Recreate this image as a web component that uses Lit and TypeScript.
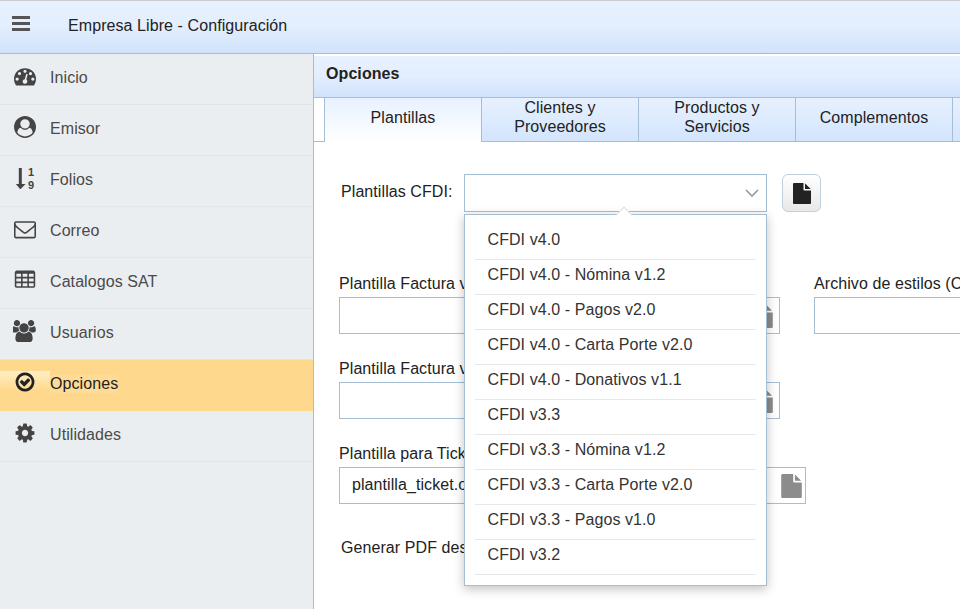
import { LitElement, css, html, svg } from 'lit';
import { customElement } from 'lit/decorators.js';

const ICONS: Record<string, unknown> = {
  gauge: svg`<path d="M384 1152q0-53-37.5-90.5t-90.5-37.5-90.5 37.5-37.5 90.5 37.5 90.5 90.5 37.5 90.5-37.5 37.5-90.5zm192-448q0-53-37.5-90.5t-90.5-37.5-90.5 37.5-37.5 90.5 37.5 90.5 90.5 37.5 90.5-37.5 37.5-90.5zm428 481l101-382q6-26-7.5-48.5t-38.5-29.5-48 6.5-30 39.5l-101 382q-60 5-107 43.5t-63 98.5q-20 77 20 146t117 89 146-20 89-117q16-60-6-117t-72-91zm660-33q0-53-37.5-90.5t-90.5-37.5-90.5 37.5-37.5 90.5 37.5 90.5 90.5 37.5 90.5-37.5 37.5-90.5zm-640-640q0-53-37.5-90.5t-90.5-37.5-90.5 37.5-37.5 90.5 37.5 90.5 90.5 37.5 90.5-37.5 37.5-90.5zm448 192q0-53-37.5-90.5t-90.5-37.5-90.5 37.5-37.5 90.5 37.5 90.5 90.5 37.5 90.5-37.5 37.5-90.5zm320 448q0 261-141 483-19 29-54 29h-1402q-35 0-54-29-141-221-141-483 0-182 71-348t191-286 286-191 348-71 348 71 286 191 191 286 71 348z"/>`,
  user: svg`<path d="M1523 1339q-22-155-87.5-257.5t-184.5-118.5q-67 74-159.5 115.5t-195.5 41.5-195.5-41.5-159.5-115.5q-119 16-184.5 118.5t-87.5 257.5q106 150 271 237.5t356 87.5 356-87.5 271-237.5zm-243-699q0-159-112.5-271.5t-271.5-112.5-271.5 112.5-112.5 271.5 112.5 271.5 271.5 112.5 271.5-112.5 112.5-271.5zm512 256q0 182-70.5 347t-190.5 286-286 191-349 71q-181 0-346-71t-286-191-191-286-71-347q0-182 71-347.5t191-286 286-191 346-70.5q183 0 349 70.5t286 191 190.5 286 70.5 347.5z"/>`,
  mail: svg`<path d="M1664 1504v-768q-32 36-69 66-268 206-426 338-51 43-83 67t-86.5 48.5-102.5 24.5h-2q-48 0-102.5-24.5t-86.5-48.5-83-67q-158-132-426-338-37-30-69-66v768q0 13 9.5 22.5t22.5 9.5h1472q13 0 22.5-9.5t9.5-22.5zm0-1051v-24.5l-.5-13-3-12.5-5.5-9-9-7.5-14-2.5h-1472q-13 0-22.5 9.5t-9.5 22.5q0 168 147 284 193 152 401 317 6 5 35 29.5t46 37.5 44.5 31.5 50.5 27.5 43 9h2q20 0 43-9t50.5-27.5 44.5-31.5 46-37.5 35-29.5q208-165 401-317 54-43 100.5-115.5t46.5-131.5zm128-37v1088q0 66-47 113t-113 47h-1472q-66 0-113-47t-47-113v-1088q0-66 47-113t113-47h1472q66 0 113 47t47 113z"/>`,
  table: svg`<path d="M576 1376v-192q0-14-9-23t-23-9h-320q-14 0-23 9t-9 23v192q0 14 9 23t23 9h320q14 0 23-9t9-23zm0-384v-192q0-14-9-23t-23-9h-320q-14 0-23 9t-9 23v192q0 14 9 23t23 9h320q14 0 23-9t9-23zm512 384v-192q0-14-9-23t-23-9h-320q-14 0-23 9t-9 23v192q0 14 9 23t23 9h320q14 0 23-9t9-23zm-512-768v-192q0-14-9-23t-23-9h-320q-14 0-23 9t-9 23v192q0 14 9 23t23 9h320q14 0 23-9t9-23zm512 384v-192q0-14-9-23t-23-9h-320q-14 0-23 9t-9 23v192q0 14 9 23t23 9h320q14 0 23-9t9-23zm512 384v-192q0-14-9-23t-23-9h-320q-14 0-23 9t-9 23v192q0 14 9 23t23 9h320q14 0 23-9t9-23zm-512-768v-192q0-14-9-23t-23-9h-320q-14 0-23 9t-9 23v192q0 14 9 23t23 9h320q14 0 23-9t9-23zm512 384v-192q0-14-9-23t-23-9h-320q-14 0-23 9t-9 23v192q0 14 9 23t23 9h320q14 0 23-9t9-23zm0-384v-192q0-14-9-23t-23-9h-320q-14 0-23 9t-9 23v192q0 14 9 23t23 9h320q14 0 23-9t9-23zm128-320v1088q0 66-47 113t-113 47h-1344q-66 0-113-47t-47-113v-1088q0-66 47-113t113-47h1344q66 0 113 47t47 113z"/>`,
  users: svg`<path d="M529 896q-162 5-265 128h-134q-82 0-138-40.5t-56-118.5q0-353 124-353 6 0 43.5 21t97.5 42.5 119 21.5q67 0 133-23-5 37-5 66 0 139 81 256zm1071 637q0 120-73 189.5t-194 69.5h-874q-121 0-194-69.5t-73-189.5q0-53 3.5-103.5t14-109 26.5-108.5 43-97.5 62-81 85.5-53.5 111.5-20q10 0 43 21.5t73 48 107 48 135 21.5 135-21.5 107-48 73-48 43-21.5q61 0 111.5 20t85.5 53.5 62 81 43 97.5 26.5 108.5 14 109 3.5 103.5zm-1024-1277q0 106-75 181t-181 75-181-75-75-181 75-181 181-75 181 75 75 181zm704 384q0 159-112.5 271.5t-271.5 112.5-271.5-112.5-112.5-271.5 112.5-271.5 271.5-112.5 271.5 112.5 112.5 271.5zm576 225q0 78-56 118.5t-138 40.5h-134q-103-123-265-128 81-117 81-256 0-29-5-66 66 23 133 23 59 0 119-21.5t97.5-42.5 43.5-21q124 0 124 353zm-128-609q0 106-75 181t-181 75-181-75-75-181 75-181 181-75 181 75 75 181z"/>`,
  check: svg`<path d="M1299 813l-422 422q-19 19-45 19t-45-19l-294-294q-19-19-19-45t19-45l102-102q19-19 45-19t45 19l147 147 275-275q19-19 45-19t45 19l102 102q19 19 19 45t-19 45zm141 83q0-148-73-273t-198-198-273-73-273 73-198 198-73 273 73 273 198 198 273 73 273-73 198-198 73-273zm224 0q0 209-103 385.5t-279.5 279.5-385.5 103-385.5-103-279.5-279.5-103-385.5 103-385.5 279.5-279.5 385.5-103 385.5 103 279.5 279.5 103 385.5z"/>`,
  cog: svg`<path d="M1152 896q0-106-75-181t-181-75-181 75-75 181 75 181 181 75 181-75 75-181zm512-109v222q0 12-8 23t-20 13l-185 28q-19 54-39 91 35 50 107 138 10 12 10 25t-9 23q-27 37-99 108t-94 71q-12 0-26-9l-138-108q-44 23-91 38-16 136-29 186-7 28-36 28h-222q-14 0-24.5-8.5t-11.5-21.5l-28-184q-49-16-90-37l-141 107q-10 9-25 9-14 0-25-11-126-114-165-168-7-10-7-23 0-12 8-23 15-21 51-66.5t54-70.5q-27-50-41-99l-183-27q-13-2-21-12.5t-8-23.5v-222q0-12 8-23t19-13l186-28q14-46 39-92-40-57-107-138-10-12-10-24 0-10 9-23 26-36 98.5-107.5t94.5-71.5q13 0 26 10l138 107q44-23 91-38 16-136 29-186 7-28 36-28h222q14 0 24.5 8.5t11.5 21.5l28 184q49 16 90 37l142-107q9-9 24-9 13 0 25 10 129 119 165 170 7 8 7 22 0 12-8 23-15 21-51 66.5t-54 70.5q26 50 41 98l183 28q13 2 21 12.5t8 23.5z"/>`,
};

const FILE_PATH = 'M1152 512v-472q22 14 36 28l408 408q14 14 28 36h-472zm-128 32q0 40 28 68t68 28h544v1056q0 40-28 68t-68 28h-1344q-40 0-68-28t-28-68v-1600q0-40 28-68t68-28h800v544z';

const MENU = [
  { id: 'gauge', label: 'Inicio' },
  { id: 'user', label: 'Emisor' },
  { id: 'sort', label: 'Folios' },
  { id: 'mail', label: 'Correo' },
  { id: 'table', label: 'Catalogos SAT' },
  { id: 'users', label: 'Usuarios' },
  { id: 'check', label: 'Opciones', selected: true },
  { id: 'cog', label: 'Utilidades' },
];

const TABS = [
  { label: 'Plantillas', active: true },
  { label: 'Clientes y Proveedores' },
  { label: 'Productos y Servicios' },
  { label: 'Complementos' },
  { label: 'Otros' },
];

const OPTIONS = [
  'CFDI v4.0',
  'CFDI v4.0 - Nómina v1.2',
  'CFDI v4.0 - Pagos v2.0',
  'CFDI v4.0 - Carta Porte v2.0',
  'CFDI v4.0 - Donativos v1.1',
  'CFDI v3.3',
  'CFDI v3.3 - Nómina v1.2',
  'CFDI v3.3 - Carta Porte v2.0',
  'CFDI v3.3 - Pagos v1.0',
  'CFDI v3.2',
];

@customElement('app-root')
export class AppRoot extends LitElement {
  static styles = css`
    :host {
      display: block;
      height: 609px;
      overflow: hidden;
      position: relative;
      background: #fff;
      color: #222;
      font: 16px 'Liberation Sans', Arial, sans-serif;
      letter-spacing: 0.08px;
    }
    .top {
      display: flex;
      height: 52px;
      border-top: 1px solid #ccc;
      border-bottom: 1px solid #a4bed4;
      background: linear-gradient(#e7f1ff, #e3eefe 50%, #d0e3fb);
    }
    .burger {
      width: 18px;
      height: 15px;
      margin: 15px 38px 0 12px;
      background: linear-gradient(#555 3px, transparent 3px, transparent 6px, #555 6px, #555 9px, transparent 9px, transparent 12px, #555 12px);
    }
    .title {
      line-height: 50px;
    }
    .layout {
      display: flex;
      height: 555px;
    }
    .side {
      width: 313px;
      flex: none;
      background: #ebeef1;
      border-right: 1px solid #a4bed4;
    }
    .item {
      display: flex;
      height: 50px;
      border-bottom: 1px solid #e2e5e8;
      color: #4a4a4a;
    }
    .item.selected {
      background: #fed98d;
      border-bottom-color: #fed98d;
      color: #222;
    }
    .ico {
      width: 36px;
      height: 22px;
      margin-top: 11px;
      padding-left: 14px;
    }
    .ico svg {
      display: block;
      fill: #444;
    }
    .ico svg.wide {
      margin-left: -0.6px;
    }
    .selected .ico {
      background: linear-gradient(#ffeec3, #fed98d) 0 0 / 100% 20px no-repeat;
    }
    .selected .ico svg {
      fill: #222;
    }
    .item span {
      margin-top: 15px;
      height: 18px;
      line-height: 18px;
    }
    .selected span {
      background: #fedc98;
    }
    .ico text {
      font: bold 11px 'Liberation Sans', Arial, sans-serif;
    }
    .main {
      flex: 1;
      min-width: 0;
      overflow: hidden;
      padding-top: 2px;
    }
    .head {
      height: 41px;
      margin-left: -1px;
      border: 1px solid #a4bed4;
      border-width: 0 0 1px 1px;
      background: linear-gradient(#e7f1ff, #e3eefe 50%, #d0e3fb);
      font-weight: bold;
      line-height: 35px;
      padding-left: 12px;
    }
    .tabs {
      display: flex;
      height: 43px;
      padding-left: 10px;
      border-bottom: 1px solid #a4bed4;
    }
    .tab {
      display: flex;
      flex: none;
      align-items: center;
      justify-content: center;
      width: 96px;
      height: 38px;
      padding: 0 30px 5px;
      border-right: 1px solid #a4bed4;
      background: linear-gradient(#e7f1ff, #d3e5fc);
      line-height: 19px;
      text-align: center;
    }
    .tab.active {
      height: 39px;
      border-left: 1px solid #a4bed4;
      background: linear-gradient(#e7f1ff, #fff);
    }
    .form {
      display: flex;
      flex-direction: column;
      width: 660px;
      padding: 32px 0 0 25px;
    }
    .pick {
      display: flex;
      align-items: flex-start;
      margin-bottom: 59px;
    }
    .pick label {
      width: 123px;
      padding-left: 2px;
      line-height: 36px;
    }
    .select {
      position: relative;
      box-sizing: border-box;
      width: 303px;
      height: 38px;
      border: 1px solid #a4bed4;
    }
    .select svg {
      position: absolute;
      right: 7px;
      top: 14px;
    }
    .btn {
      display: flex;
      align-items: center;
      justify-content: center;
      box-sizing: border-box;
      width: 39px;
      height: 38px;
      margin-left: 15px;
      border: 1px solid #bfd0df;
      border-radius: 6px;
      background: linear-gradient(#fff, #e8e8e8);
    }
    .btn svg {
      fill: #222;
    }
    .rows {
      display: grid;
      grid-template-columns: 441px 1fr;
      column-gap: 34px;
      row-gap: 22px;
    }
    .field label {
      display: block;
      height: 26px;
      line-height: 25px;
      white-space: nowrap;
    }
    .box {
      display: flex;
      align-items: center;
      box-sizing: border-box;
      height: 37px;
      padding: 0 6px 0 12px;
      border: 1px solid #a4bed4;
    }
    .box span {
      margin-bottom: 2px;
    }
    .box svg {
      margin-left: auto;
      fill: #8c8c8c;
      flex: none;
    }
    .ticket .box {
      width: 467px;
      padding-right: 3px;
    }
    .note {
      padding-left: 2px;
      margin-top: 35px;
    }
    .menu {
      position: absolute;
      left: 464px;
      top: 214px;
      box-sizing: border-box;
      width: 303px;
      height: 372px;
      padding: 10px;
      background: #fff;
      border: 1px solid #a4bed4;
      box-shadow: 0 3px 10px rgba(0, 0, 0, 0.25);
      color: #333;
    }
    .menu::before {
      content: '';
      position: absolute;
      left: 153px;
      top: -6px;
      width: 11px;
      height: 11px;
      background: #fff;
      border: 1px solid #d9dfe4;
      border-width: 1px 0 0 1px;
      transform: rotate(45deg);
    }
    .opt {
      position: relative;
      box-sizing: border-box;
      height: 35px;
      padding-left: 12.5px;
      border-bottom: 1px solid #e8e8e8;
      line-height: 30px;
    }
  `;

  private file(w: number, h: number) {
    return html`<svg width=${w} height=${h} viewBox="128 0 1536 1792"><path d=${FILE_PATH} /></svg>`;
  }

  private icon(id: string) {
    if (id === 'sort') {
      return html`<svg width="22" height="22" viewBox="0 0 22 22">
        <path d="M4.8 1h3v16h3.7L6.3 22.4 1.9 17h2.9z" />
        <text x="14" y="9">1</text>
        <text x="14" y="22">9</text>
      </svg>`;
    }
    if (id === 'users') {
      return html`<svg class="wide" width="23.6" height="22" viewBox="0 0 1920 1792">${ICONS[id]}</svg>`;
    }
    return html`<svg width="22" height="22" viewBox="0 0 1792 1792">${ICONS[id]}</svg>`;
  }

  render() {
    return html`
      <div class="top">
        <div class="burger"></div>
        <div class="title">Empresa Libre - Configuración</div>
      </div>
      <div class="layout">
        <nav class="side">
          ${MENU.map(
            (m) => html`<div class="item ${m.selected ? 'selected' : ''}">
              <div class="ico">${this.icon(m.id)}</div>
              <span>${m.label}</span>
            </div>`,
          )}
        </nav>
        <div class="main">
          <div class="head">Opciones</div>
          <div class="tabs">
            ${TABS.map((t) => html`<div class="tab ${t.active ? 'active' : ''}">${t.label}</div>`)}
          </div>
          <div class="form">
            <div class="pick">
              <label>Plantillas CFDI:</label>
              <div class="select">
                <svg width="14" height="8" viewBox="0 0 14 8"><path d="M1 1l6 6 6-6" fill="none" stroke="#8d9aa5" stroke-width="1.6" /></svg>
              </div>
              <div class="btn">${this.file(18, 21)}</div>
            </div>
            <div class="rows">
              <div class="field">
                <label>Plantilla Factura v4.0 (CFDI):</label>
                <div class="box">${this.file(21, 24)}</div>
              </div>
              <div class="field">
                <label>Archivo de estilos (CSS):</label>
                <div class="box"></div>
              </div>
              <div class="field">
                <label>Plantilla Factura v3.3 (CFDI):</label>
                <div class="box">${this.file(21, 24)}</div>
              </div>
              <div></div>
              <div class="field ticket">
                <label>Plantilla para Tickets:</label>
                <div class="box"><span>plantilla_ticket.odt</span>${this.file(21, 24)}</div>
              </div>
              <div></div>
            </div>
            <div class="note">Generar PDF desde LibreOffice:</div>
          </div>
        </div>
      </div>
      <div class="menu">
        ${OPTIONS.map((o) => html`<div class="opt">${o}</div>`)}
      </div>
    `;
  }
}
